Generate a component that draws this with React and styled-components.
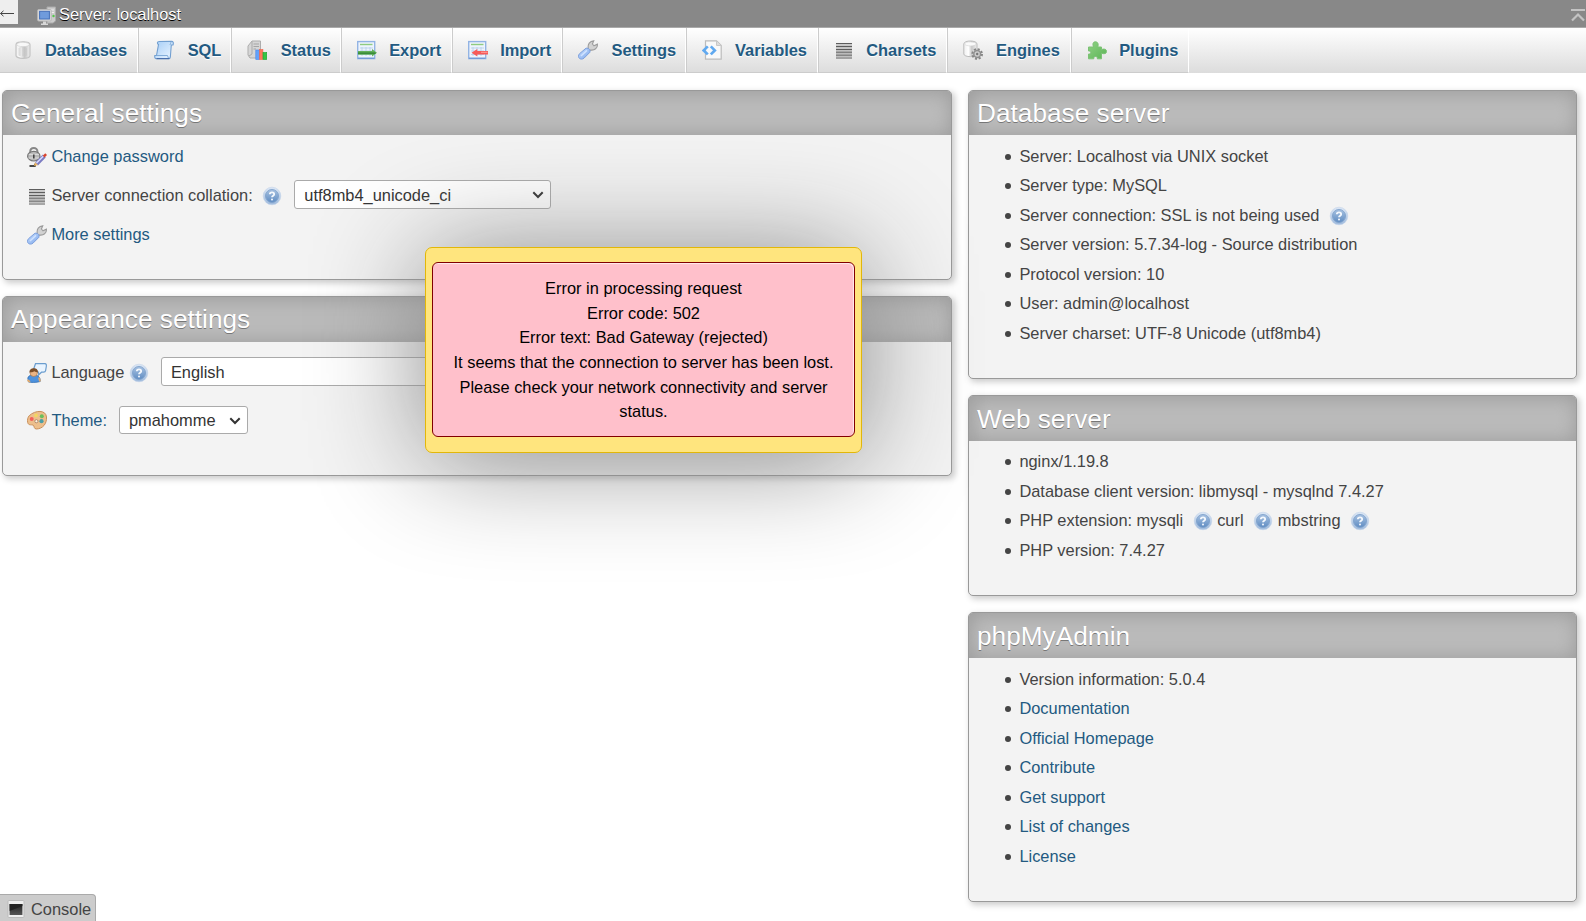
import React from 'react';
import styled, { createGlobalStyle } from 'styled-components';

const GlobalStyle = createGlobalStyle`
  * { box-sizing: border-box; }
  html, body { margin: 0; padding: 0; background: #fff; overflow: hidden; }
  body {
    font: 16.4px/24.6px "Liberation Sans", Arial, Helvetica, sans-serif;
    color: #444;
  }
`;

const Page = styled.div`
  position: relative;
  height: 921px;
  overflow: hidden;
`;

const ServerBar = styled.header`
  display: flex;
  align-items: flex-start;
  height: 28px;
  background: #888;
  border-bottom: 1px solid #aaa;
  color: #fff;
  text-shadow: 0 1px 0 #000;
`;

const BackButton = styled.div`
  width: 18px;
  height: 24px;
  background: #eee;
  margin-right: 19px;
  svg { display: block; }
`;

const Crumb = styled.div`
  display: flex;
  flex: 1;
  gap: 2px;
  padding-top: 2px;
  svg { margin-top: 4px; }
`;

const CollapseSlot = styled.div`
  padding: 8px 1px 0 0;
  svg { display: block; }
`;

const TabBar = styled.nav`
  display: flex;
  height: 45px;
  background: linear-gradient(#fff, #dcdcdc);
`;

const Tab = styled.a`
  display: flex;
  align-items: center;
  width: ${(p) => p.$w}px;
  height: 45px;
  padding: 0 0 1px ${(p) => (p.$first ? 13 : 15)}px;
  border-left: ${(p) => (p.$first ? 0 : 1)}px solid #ccc;
  border-right: 1px solid #fff;
  border-bottom: 1px solid #ccc;
  gap: ${(p) => p.$gap}px;
  color: #235a81;
  font-weight: bold;
  text-shadow: 0 1px 0 #fff;
  svg { flex: none; }
  span { padding-top: 2px; }
`;

const Columns = styled.main`
  display: grid;
  grid-template-columns: 950px 609px;
  column-gap: 16px;
  align-items: start;
  padding: 17px 9px 0 2px;
`;

const Column = styled.div`
  display: flex;
  flex-direction: column;
  gap: 16px;
`;

const Panel = styled.section`
  height: ${(p) => p.$h}px;
  background: #f3f3f3;
  border: 1px solid #999;
  border-radius: 5px;
  box-shadow: 2.5px 2.5px 6px #ccc;
  overflow: hidden;
`;

const PanelTitle = styled.h2`
  margin: 0;
  height: ${(p) => (p.$tall ? 45 : 44)}px;
  padding: ${(p) => p.$drop || 0}px 8px 0;
  background: #bbb;
  color: #fff;
  font-size: 26.24px;
  line-height: 44px;
  font-weight: normal;
  text-shadow: 0 1px 0 #777;
  box-shadow: 1px 1px 19px #999 inset;
`;

const BulletList = styled.ul`
  margin: ${(p) => p.$top}px 0 0;
  padding: 0 0 0 50.4px;
  list-style: none;
`;

const Bullet = styled.li`
  height: 29.52px;
  white-space: pre;
  &::before {
    content: '';
    display: inline-block;
    width: 6px;
    height: 6px;
    margin: 0 8.4px 0 -14.4px;
    border-radius: 50%;
    background: #444;
    vertical-align: 2px;
  }
`;

const Link = styled.a`
  color: #235a81;
`;

const SettingRows = styled.div`
  display: flex;
  flex-direction: column;
  padding-left: 24px;
  padding-top: ${(p) => p.$top}px;
  gap: ${(p) => p.$gap}px;
`;

const SettingRow = styled.div`
  display: flex;
  align-items: center;
  height: ${(p) => p.$h || 29}px;
  svg { flex: none; }
`;

const Label = styled.span`
  margin: 0 ${(p) => p.$after || 0}px 0 4.4px;
  color: ${(p) => (p.$link ? '#235a81' : '#444')};
`;

const SelectBox = styled.div`
  display: flex;
  align-items: center;
  justify-content: space-between;
  width: ${(p) => p.$w}px;
  height: ${(p) => p.$h || 29}px;
  margin: 0 0 ${(p) => p.$lift || 0}px ${(p) => p.$ml}px;
  padding: 1px 6px 0 9px;
  background: #fff;
  border: 1px solid #aaa;
  border-radius: 3px;
  color: #333;
`;

const InlineHelp = styled.span`
  svg { vertical-align: -5px; margin-left: 5px; }
`;

const Notification = styled.div`
  position: absolute;
  left: 425px;
  top: 247px;
  width: 437px;
  height: 206px;
  padding: 14px 6px;
  background: #ffe57e;
  border: 1px solid #e2b709;
  border-radius: 7px;
  box-shadow: 0 6px 112px #888;
`;

const ErrorBox = styled.div`
  height: 175px;
  padding: 13.3px 15px;
  background: pink;
  border: 1px solid maroon;
  border-radius: 6px;
  box-shadow: inset -1px 1px 1px rgba(255, 255, 255, 0.7);
  color: #000;
  text-align: center;
`;

const ConsoleTab = styled.div`
  position: absolute;
  left: 0;
  bottom: 0;
  display: flex;
  align-items: center;
  gap: 5px;
  width: 96px;
  height: 27px;
  padding: 2px 0 0 6px;
  background: #ccc;
  border: 1px solid #aaa;
  border-left: 0;
  border-bottom: 0;
  border-radius: 0 4px 0 0;
`;

const Svg = ({ children }) => (
  <svg width="20" height="20" viewBox="0 0 20 20">{children}</svg>
);

const Defs = styled.svg`
  position: absolute;
`;

const Gradients = () => (
  <Defs width="0" height="0">
    <defs>
      <linearGradient id="metal"><stop offset="0" stopColor="#eee" /><stop offset=".35" stopColor="#fff" /><stop offset=".6" stopColor="#c8c8c8" /><stop offset="1" stopColor="#eee" /></linearGradient>
      <linearGradient id="sky" x2="1" y2="1"><stop offset="0" stopColor="#a5cdf7" /><stop offset="1" stopColor="#ecf6ff" /></linearGradient>
      <linearGradient id="help" x2="0" y2="1"><stop offset="0" stopColor="#a9c3e2" /><stop offset="1" stopColor="#5f8cc2" /></linearGradient>
      <linearGradient id="helpRing" x2="0" y2="1"><stop offset="0" stopColor="#dce7f5" /><stop offset="1" stopColor="#9db9dc" /></linearGradient>
      <linearGradient id="handle" x2="1" y2="1"><stop offset="0" stopColor="#c4dcff" /><stop offset="1" stopColor="#7fa8ea" /></linearGradient>
      <linearGradient id="screen" x2="0" y2="1"><stop offset="0" stopColor="#222" /><stop offset="1" stopColor="#555" /></linearGradient>
      <linearGradient id="puzzle" x2="1" y2="1"><stop offset="0" stopColor="#8fd184" /><stop offset="1" stopColor="#5cb556" /></linearGradient>
    </defs>
  </Defs>
);

const DatabaseIcon = () => (
  <Svg>
    <path d="M3 4.5C3 .8 17 .8 17 4.5V15.5C17 19.2 3 19.2 3 15.5Z" fill="url(#metal)" stroke="#c4c4c4" strokeWidth="1.2" />
    <ellipse cx="10" cy="4.5" rx="6.2" ry="2.2" fill="#f8f8f8" stroke="#ccc" strokeWidth=".6" />
    <path d="M5.5 8.5C5.5 6 14 6 14 8.5V15C14 17 5.5 17 5.5 15Z" fill="#c4c4c4" opacity=".55" />
    <path d="M8.3 7.5v9" stroke="#e8e8e8" strokeWidth="1.4" />
  </Svg>
);

const ScrollIcon = () => (
  <Svg>
    <path d="M5 1.5C3 1.5 3 4 4.5 4.5L2.5 15.5H.8C.5 18 1.2 18.8 2.4 18.8H15C16.5 18.8 16.5 16.5 16.5 15L17.3 5H19C19.8 2.5 19 1.2 17.6 1.2Z" fill="url(#sky)" stroke="#729fd0" strokeWidth="1.1" />
    <path d="M15.8 5C16.5 4.5 16.6 2.2 17.6 1.5M2.5 15.5H13.5L14.5 18.3" fill="none" stroke="#83add9" />
    <path d="M2.5 18.6H15.3" stroke="#476caa" strokeWidth="1.1" />
  </Svg>
);

const StatusIcon = () => (
  <Svg>
    <path d="M1 6L5 1H13.5V14L9 18H3L1 15Z" fill="#d6d6d6" stroke="#adadad" />
    <path d="M5 1.5V14L2 16" fill="none" stroke="#aaa" />
    <path d="M6.5 4H12M6.5 6.5H12M6.5 9H9" stroke="#a5a5a5" />
    <rect x="8.8" y="10" width="3.6" height="9.5" fill="#63a1fb" stroke="#4687ec" strokeWidth=".6" />
    <rect x="12.5" y="9.5" width="3.4" height="10" fill="#ff785c" stroke="#f0664c" strokeWidth=".6" />
    <rect x="16" y="12.5" width="3.7" height="7" fill="#35c544" stroke="#16a529" strokeWidth=".6" />
  </Svg>
);

const SheetBase = () => (
  <>
    <rect x=".7" y="1.6" width="17" height="17" fill="#edf4fc" stroke="#93b4e4" strokeWidth="1.4" />
    <path d="M3 4.5H15.5" stroke="#8fcb80" strokeWidth="1.4" />
    <path d="M3 8H16M3 11H16M3 14.5H16M5 7V16M9 7V16M13 7V16" stroke="#b4cdea" strokeWidth=".8" />
    <path d="M1 18.2H17.5" stroke="#6d95d3" strokeWidth="1.2" />
  </>
);

const ExportIcon = () => (
  <Svg>
    <SheetBase />
    <path d="M1 11H15V9L20 12.8L15 16.5V14.7H1Z" fill="#62b05a" />
    <path d="M1 13.2H18.5" stroke="#3a8c3a" strokeWidth="1.6" />
  </Svg>
);

const ImportIcon = () => (
  <Svg>
    <SheetBase />
    <path d="M20 11V14.5H9.3V16.5L3.5 12.8L9.3 9V11Z" fill="#f75b58" />
    <path d="M13 12.3H19.5" stroke="#ff9e9b" strokeWidth="1" />
  </Svg>
);

const WrenchIcon = () => (
  <Svg>
    <path d="M10.3 8.2C9.5 4.5 11.8 1 15.8 .7L14.4 4L16 5.8L19.4 4.2C19.8 8 16.5 10.7 12.5 10L10.8 11.2L9 9.4Z" fill="#d2d2d2" stroke="#9c9c9c" strokeWidth="1.1" />
    <path d="M1.5 13.7L8 8.2C10.8 7.8 12.8 9.8 11.8 12.4L6.2 18C2.8 21-1.6 17.4 1.5 13.7Z" fill="url(#handle)" stroke="#7c9fdc" strokeWidth="1" />
    <path d="M3 16L9 10.4" stroke="#cfe2ff" strokeWidth="1.6" />
  </Svg>
);

const VariablesIcon = () => (
  <Svg>
    <path d="M3.5 .8H14.5L19.2 5.5V19.2H3.5Z" fill="#f9f9f9" stroke="#bcbcbc" strokeWidth="1.2" />
    <path d="M14.5 1V5.5H19" fill="#ddd" stroke="#c8c8c8" />
    <path d="M5.8 6.4L1.7 10.4L5.8 14.4M8.8 6.4L12.8 10.4L8.8 14.4" fill="none" stroke="#60a9f0" strokeWidth="2.7" />
  </Svg>
);

const LinesIcon = () => (
  <Svg>
    <path d="M2 3.5H18M2 6.4H18M2 9.3H18M2 12.2H18M2 15.1H18M2 18H18" stroke="#5d5d5d" strokeWidth="1.2" />
    <path d="M2 4.8H18M2 7.7H18M2 10.6H18M2 13.5H18M2 16.4H18" stroke="#bbb" strokeWidth="1" />
  </Svg>
);

const EnginesIcon = () => (
  <Svg>
    <path d="M.8 4C.8 0 14 0 14 4V14C14 17.5 .8 17.5 .8 14Z" fill="url(#metal)" stroke="#bcbcbc" />
    <ellipse cx="7.4" cy="3.9" rx="5.8" ry="2" fill="#fafafa" stroke="#ccc" strokeWidth=".5" />
    <circle cx="14.2" cy="14" r="4.8" fill="none" stroke="#858585" strokeWidth="2" strokeDasharray="2.1 1.65" />
    <circle cx="14.2" cy="14" r="3.4" fill="#ccc" stroke="#909090" strokeWidth="1.5" />
    <circle cx="14.2" cy="14" r="1.2" fill="#777" />
  </Svg>
);

const PluginIcon = () => (
  <Svg>
    <path d="M1.5 7H6.5C5.3 4 6 1.8 8.4 1.8S11.8 4 10.8 7H14.5V9.5C17.5 8.5 19.5 9.2 19.5 11.5S17.2 14.2 14.5 13.2V18.8H10.3C11 15.8 6.3 15.5 6.8 18.8H1.5V14C4.5 14.5 4.5 10.5 1.5 11Z" fill="url(#puzzle)" stroke="#7cc275" />
  </Svg>
);

const ServerIcon = () => (
  <Svg>
    <path d="M10 1H18.5V15L16 17H10Z" fill="#ccc" stroke="#aaa" />
    <path d="M12 4H17M12 6.5H17" stroke="#eee" />
    <circle cx="16.5" cy="10" r="1.2" fill="#54c64c" />
    <rect x=".7" y="3.5" width="13.5" height="11.5" rx="1" fill="#ddd" stroke="#b8b8b8" />
    <rect x="2.6" y="5.3" width="9.8" height="7.7" fill="#6f9bdc" stroke="#4470ba" />
    <path d="M6 15.5H9V17.5H11V19H4V17.5H6Z" fill="#d8d8d8" />
  </Svg>
);

const PasswordIcon = () => (
  <Svg>
    <path d="M3.2 6V5C3.2-.2 10.5-.2 10.5 5V6" fill="none" stroke="#888" strokeWidth="2" />
    <ellipse cx="6.8" cy="9.2" rx="6.2" ry="4.8" fill="#b9b9b9" stroke="#777" strokeWidth="1.2" />
    <path d="M1.8 7.4H12M1.5 11H12" stroke="#ddd" strokeWidth="1" />
    <path d="M6.8 7.5V11.5" stroke="#444" strokeWidth="1.6" />
    <path d="M2.5 19H8V16.8" fill="none" stroke="#111" strokeWidth="1.4" />
    <path d="M9.5 17L17.3 9" stroke="#7b7bc2" strokeWidth="4" />
    <path d="M9.5 16L16.5 9" stroke="#d8dcff" strokeWidth="1.5" />
    <path d="M17 7.5L18.8 9.3" stroke="#d8462f" strokeWidth="3.4" />
    <path d="M7 19L8 15.3L11 18Z" fill="#efb764" />
  </Svg>
);

const LanguageIcon = () => (
  <Svg>
    <path d="M8.5 .7H18C19.3 .7 19.5 2 19.3 3.5L18.6 7.6C18.4 8.8 17.5 9.2 16.5 9.2H14.5L11.5 12V9H9C7 9 6.5 7.5 7 5Z" fill="#e9f4ff" stroke="#6b9dce" strokeWidth="1.2" />
    <path d="M.8 15C1.5 12.4 4 12 7 12C11 12 13.5 14 13.2 18.5C9 19.8 4 19.5 1.5 19Z" fill="#4d92de" stroke="#326fb3" strokeWidth=".8" />
    <circle cx="6.7" cy="9.8" r="3.7" fill="#eab586" stroke="#a47144" strokeWidth=".6" />
    <path d="M2.5 9.5C1.8 4 11.8 3.8 10.9 9.5C9.5 9.2 8.4 9 7.5 8.2C6 9.2 4.2 9.2 2.5 9.5Z" fill="#7b4e29" />
    <path d="M.5 17L3 19M12 14.5L13 18.5" stroke="#e5aa6a" strokeWidth="1.8" />
  </Svg>
);

const PaletteIcon = () => (
  <Svg>
    <path d="M2.2 5.7C8.5-.2 19-.2 19.5 7C20 14 15.5 18.8 9.5 19C6.7 19 7.5 16.2 6.2 15.2C4.5 14.3 1.5 15.8 .7 12.5C.2 10 .7 7.5 2.2 5.7Z" fill="#edbf8c" stroke="#c98f5a" />
    <circle cx="4.7" cy="9" r="2" fill="#f4605a" />
    <circle cx="9" cy="5.4" r="1.8" fill="#f2d860" />
    <circle cx="14.8" cy="6.3" r="2" fill="#6abf5c" />
    <circle cx="14.5" cy="11.2" r="2.1" fill="#4b9fa8" />
    <circle cx="9.4" cy="11.2" r="1.6" fill="#fff3e3" stroke="#a98263" strokeWidth=".9" />
  </Svg>
);

const HelpIcon = () => (
  <Svg>
    <circle cx="10" cy="10" r="8.8" fill="url(#helpRing)" stroke="#c3d4ea" strokeWidth=".6" />
    <circle cx="10" cy="10" r="6.5" fill="url(#help)" stroke="#7fa1cc" strokeWidth=".9" />
    <path d="M7.8 8.2C7.9 5.7 12.2 5.7 12.2 8.2C12.2 9.7 10 9.7 10 11.3" fill="none" stroke="#f4f8fd" strokeWidth="1.8" />
    <circle cx="10" cy="13.5" r="1" fill="#f4f8fd" />
  </Svg>
);

const ConsoleIcon = () => (
  <Svg>
    <rect x="2" y="1.5" width="16" height="17" rx="1" fill="#eee" stroke="#bbb" />
    <rect x="3.6" y="5" width="12.8" height="11" fill="url(#screen)" />
    <path d="M3.6 5V12L16.4 7V5Z" fill="#222" />
  </Svg>
);

const Chevron = () => (
  <svg width="12" height="8" viewBox="0 0 12 8">
    <path d="M1.3 1.3L6 6L10.7 1.3" fill="none" stroke="#333" strokeWidth="2" />
  </svg>
);

// name, cell width, space between icon and label, icon
const TABS = [
  ['Databases', 138, 12, DatabaseIcon],
  ['SQL', 93, 13.7, ScrollIcon],
  ['Status', 110, 13.7, StatusIcon],
  ['Export', 111, 12.2, ExportIcon],
  ['Import', 110, 12.2, ImportIcon],
  ['Settings', 124, 13.5, WrenchIcon],
  ['Variables', 132, 13, VariablesIcon],
  ['Charsets', 129, 12.2, LinesIcon],
  ['Engines', 124, 13, EnginesIcon],
  ['Plugins', 118, 12.2, PluginIcon],
];

const PMA_LINKS = ['Documentation', 'Official Homepage', 'Contribute', 'Get support', 'List of changes', 'License'];

export default function App() {
  return (
    <Page>
      <GlobalStyle />
      <Gradients />
      <ServerBar>
        <BackButton>
          <svg width="18" height="24" viewBox="0 0 18 24">
            <path d="M14 13.5H.5M3.5 10.8L.5 13.5L3.5 16.2" fill="none" stroke="#444" strokeWidth="1" />
          </svg>
        </BackButton>
        <Crumb><ServerIcon /><span>Server: localhost</span></Crumb>
        <CollapseSlot>
          <svg width="14" height="14" viewBox="0 0 14 14">
            <path d="M0 2H14M1 12.5L7 6.5L13 12.5" fill="none" stroke="#c3c3c3" strokeWidth="2.2" />
          </svg>
        </CollapseSlot>
      </ServerBar>
      <TabBar>
        {TABS.map(([name, w, gap, Icon], i) => (
          <Tab key={name} $w={w} $gap={gap} $first={i === 0}><Icon /><span>{name}</span></Tab>
        ))}
      </TabBar>
      <Columns>
        <Column>
          <Panel $h={190}>
            <PanelTitle>General settings</PanelTitle>
            <SettingRows $top={7} $gap={10}>
              <SettingRow><PasswordIcon /><Label $link>Change password</Label></SettingRow>
              <SettingRow>
                <LinesIcon />
                <Label $after={9.6}>Server connection collation:</Label>
                <HelpIcon />
                <SelectBox $w={257} $ml={12} $lift={2}>utf8mb4_unicode_ci<Chevron /></SelectBox>
              </SettingRow>
              <SettingRow><WrenchIcon /><Label $link>More settings</Label></SettingRow>
            </SettingRows>
          </Panel>
          <Panel $h={180}>
            <PanelTitle $tall>Appearance settings</PanelTitle>
            <SettingRows $top={16} $gap={19}>
              <SettingRow>
                <LanguageIcon />
                <Label $after={4.6}>Language</Label>
                <HelpIcon />
                <SelectBox $w={400} $ml={12} $lift={2}>English<Chevron /></SelectBox>
              </SettingRow>
              <SettingRow $h={28}>
                <PaletteIcon />
                <Label $link>Theme:</Label>
                <SelectBox $w={129} $h={28} $ml={12}>pmahomme<Chevron /></SelectBox>
              </SettingRow>
            </SettingRows>
          </Panel>
        </Column>
        <Column>
          <Panel $h={289}>
            <PanelTitle>Database server</PanelTitle>
            <BulletList $top={8.9}>
              <Bullet>Server: Localhost via UNIX socket</Bullet>
              <Bullet>Server type: MySQL</Bullet>
              <Bullet>Server connection: SSL is not being used <InlineHelp><HelpIcon /></InlineHelp></Bullet>
              <Bullet>Server version: 5.7.34-log - Source distribution</Bullet>
              <Bullet>Protocol version: 10</Bullet>
              <Bullet>User: admin@localhost</Bullet>
              <Bullet>Server charset: UTF-8 Unicode (utf8mb4)</Bullet>
            </BulletList>
          </Panel>
          <Panel $h={201}>
            <PanelTitle $tall $drop={1}>Web server</PanelTitle>
            <BulletList $top={8.4}>
              <Bullet>nginx/1.19.8</Bullet>
              <Bullet>Database client version: libmysql - mysqlnd 7.4.27</Bullet>
              <Bullet>
                PHP extension: mysqli <InlineHelp><HelpIcon /></InlineHelp> curl <InlineHelp><HelpIcon /></InlineHelp> mbstring <InlineHelp><HelpIcon /></InlineHelp>
              </Bullet>
              <Bullet>PHP version: 7.4.27</Bullet>
            </BulletList>
          </Panel>
          <Panel $h={290}>
            <PanelTitle $tall $drop={1}>phpMyAdmin</PanelTitle>
            <BulletList $top={8.9}>
              <Bullet>Version information: 5.0.4</Bullet>
              {PMA_LINKS.map((t) => <Bullet key={t}><Link>{t}</Link></Bullet>)}
            </BulletList>
          </Panel>
        </Column>
      </Columns>
      <Notification>
        <ErrorBox>
          Error in processing request<br />
          Error code: 502<br />
          Error text: Bad Gateway (rejected)<br />
          It seems that the connection to server has been lost. Please check your network connectivity and server status.
        </ErrorBox>
      </Notification>
      <ConsoleTab><ConsoleIcon />Console</ConsoleTab>
    </Page>
  );
}
